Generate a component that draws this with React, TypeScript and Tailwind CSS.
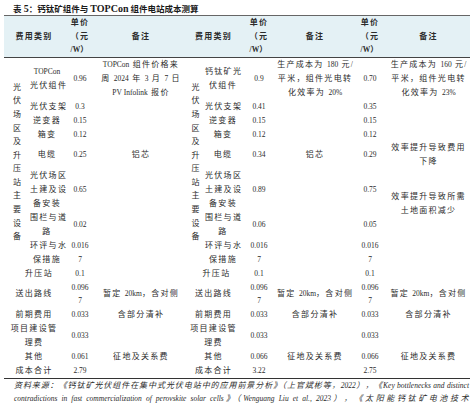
import React from 'react';

const font = "font-['Liberation_Serif','Noto_Sans_CJK_SC',serif]";

// latin runs are narrower than the CJK text around them
function L({ children }: { children: React.ReactNode }) {
  return <span className="text-[7.5px] tracking-normal">{children}</span>;
}

const lines = (s: string) =>
  s.split('|').map((part, i, arr) => (
    <React.Fragment key={i}>
      {part}
      {i < arr.length - 1 && <br />}
    </React.Fragment>
  ));

function Vertical({ text }: { text: string }) {
  return (
    <div className="flex flex-col items-center">
      {Array.from(text).map((ch, i) => (
        <span key={i} className="block leading-[13.6px] tracking-normal">
          {ch}
        </span>
      ))}
    </div>
  );
}

function Th({ children, colSpan }: { children: React.ReactNode; colSpan?: number }) {
  return (
    <th
      colSpan={colSpan}
      className="h-[42px] p-0 align-middle text-center font-bold leading-[13.6px] whitespace-nowrap border-t border-b border-t-[#666] border-b-[#444] border-b-dotted"
    >
      {children}
    </th>
  );
}

type Cell = { v: React.ReactNode; rowSpan?: number; colSpan?: number; num?: boolean };

function Td({ cell, last }: { cell: Cell; last?: boolean }) {
  return (
    <td
      rowSpan={cell.rowSpan}
      colSpan={cell.colSpan}
      className={
        'p-0 align-middle text-center leading-[13.9px] whitespace-nowrap ' +
        (cell.num ? 'text-[7.5px] tracking-normal ' : '') +
        (last ? 'border-b border-[#333]' : '')
      }
    >
      {cell.v}
    </td>
  );
}

const group = '光伏场区及升压站主要设备';

const rows: Cell[][] = [
  [
    { v: <Vertical text={group} />, rowSpan: 8 },
    { v: <><L>TOPCon</L><br />光伏组件</> },
    { v: '0.96', num: true },
    {
      v: (
        <>
          <L>TOPCon</L> 组件价格来<br />周 <L>2024</L> 年 <L>3</L> 月 <L>7</L> 日<br />
          <L>PV Infolink</L> 报价
        </>
      ),
    },
    { v: <Vertical text={group} />, rowSpan: 8 },
    { v: lines('钙钛矿光|伏组件') },
    { v: '0.9', num: true },
    { v: <>生产成本为 <L>180</L> 元<L>/</L><br />平米，组件光电转<br />化效率为 <L>20%</L></> },
    { v: '0.70', num: true },
    { v: <>生产成本为 <L>160</L> 元<L>/</L><br />平米，组件光电转<br />化效率为 <L>23%</L></> },
  ],
  [
    { v: '光伏支架' }, { v: '0.3', num: true }, { v: '' },
    { v: '光伏支架' }, { v: '0.41', num: true }, { v: '' },
    { v: '0.35', num: true }, { v: '' },
  ],
  [
    { v: '逆变器' }, { v: '0.15', num: true }, { v: '' },
    { v: '逆变器' }, { v: '0.15', num: true }, { v: '' },
    { v: '0.15', num: true }, { v: '' },
  ],
  [
    { v: '箱变' }, { v: '0.12', num: true }, { v: '' },
    { v: '箱变' }, { v: '0.12', num: true }, { v: '' },
    { v: '0.12', num: true }, { v: '' },
  ],
  [
    { v: '电缆' }, { v: '0.25', num: true }, { v: '铝芯' },
    { v: '电缆' }, { v: '0.34', num: true }, { v: '铝芯' },
    { v: '0.29', num: true }, { v: lines('效率提升导致费用|下降') },
  ],
  [
    { v: lines('光伏场区|土建及设|备安装') }, { v: '0.65', num: true }, { v: '' },
    { v: lines('光伏场区|土建及设|备安装') }, { v: '0.89', num: true }, { v: '' },
    { v: '0.75', num: true }, { v: lines('效率提升导致所需|土地面积减少'), rowSpan: 2 },
  ],
  [
    { v: lines('围栏与道|路') }, { v: '0.02', num: true }, { v: '' },
    { v: lines('围栏与道|路') }, { v: '0.06', num: true }, { v: '' },
    { v: '0.05', num: true },
  ],
  [
    { v: lines('环评与水|保措施') }, { v: lines('0.016|7'), num: true }, { v: '' },
    { v: lines('环评与水|保措施') }, { v: lines('0.016|7'), num: true }, { v: '' },
    { v: lines('0.016|7'), num: true }, { v: '' },
  ],
  [
    { v: <span className="pl-[10px]">升压站</span>, colSpan: 2 }, { v: '0.1', num: true }, { v: '' },
    { v: <span className="pl-[6px]">升压站</span>, colSpan: 2 }, { v: '0.1', num: true }, { v: '' },
    { v: '0.1', num: true }, { v: '' },
  ],
  [
    { v: '送出路线', colSpan: 2 }, { v: lines('0.096|7'), num: true }, { v: <>暂定 <L>20km</L>，含对侧</> },
    { v: '送出路线', colSpan: 2 }, { v: lines('0.096|7'), num: true }, { v: <>暂定 <L>20km</L>，含对侧</> },
    { v: lines('0.096|7'), num: true }, { v: <>暂定 <L>20km</L>，含对侧</> },
  ],
  [
    { v: '前期费用', colSpan: 2 }, { v: '0.033', num: true }, { v: '含部分清补' },
    { v: '前期费用', colSpan: 2 }, { v: '0.033', num: true }, { v: '含部分清补' },
    { v: '0.033', num: true }, { v: '含部分清补' },
  ],
  [
    { v: lines('项目建设管|理费'), colSpan: 2 }, { v: '0.033', num: true }, { v: '' },
    { v: lines('项目建设管|理费'), colSpan: 2 }, { v: '0.033', num: true }, { v: '' },
    { v: '0.033', num: true }, { v: '' },
  ],
  [
    { v: '其他', colSpan: 2 }, { v: '0.061', num: true }, { v: '征地及关系费' },
    { v: '其他', colSpan: 2 }, { v: '0.066', num: true }, { v: '征地及关系费' },
    { v: '0.066', num: true }, { v: '征地及关系费' },
  ],
  [
    { v: '成本合计', colSpan: 2 }, { v: '2.79', num: true }, { v: '' },
    { v: '成本合计', colSpan: 2 }, { v: '3.22', num: true }, { v: '' },
    { v: '2.75', num: true }, { v: '' },
  ],
];

const colWidths = ['w-[26px]', 'w-[34px]', 'w-[32px]', 'w-[90px]', 'w-[19px]', 'w-[36px]', 'w-[36px]', 'w-[76px]', 'w-[34px]', 'w-[83px]'];

export default function App() {
  return (
    <div className={`${font} w-[474px] h-[404px] overflow-hidden bg-white text-[#2b2b2b]`}>
      <div className="pl-[13px] pt-[2px] h-[15px] leading-[13px] text-[8.5px] font-bold text-[#1a1a1a] whitespace-nowrap">
        表 <span className="text-[10px]">5</span>：钙钛矿组件与 <span className="text-[10px]">TOPCon</span> 组件电站成本测算
      </div>

      <table className="ml-[4px] w-[466px] table-fixed border-collapse text-[8px] tracking-[1.3px]">
        <colgroup>
          {colWidths.map((w, i) => (
            <col key={i} className={w} />
          ))}
        </colgroup>
        <thead className="bg-[#e4f1f5]">
          <tr>
            <Th colSpan={2}>费用类别</Th>
            <Th>单价<br />（元<br /><L>/W</L>）</Th>
            <Th>备注</Th>
            <Th colSpan={2}>费用类别</Th>
            <Th>单价<br />（元<br /><L>/W</L>）</Th>
            <Th>备注</Th>
            <Th>单价<br />（元<br /><L>/W</L>）</Th>
            <Th>备注</Th>
          </tr>
        </thead>
        <tbody>
          {rows.map((r, i) => (
            <tr key={i}>
              {r.map((c, j) => (
                <Td key={j} cell={c} last={i === rows.length - 1} />
              ))}
            </tr>
          ))}
        </tbody>
      </table>

      <div className="ml-[14px] w-[455px] italic text-[8px] leading-[13.4px] tracking-[0.4px] text-[#2b2b2b]">
        <div className="text-justify [text-align-last:justify]">
          资料来源：《钙钛矿光伏组件在集中式光伏电站中的应用前景分析》（上官斌彬等，<L>2022</L>），《<L>Key bottlenecks and distinct</L>
        </div>
        <div className="text-justify [text-align-last:justify]">
          <L>contradictions in fast commercialization of perovskite solar cells</L>》（<L>Wenguang Liu et al., 2023</L>），《太阳能钙钛矿电池技术
        </div>
        <div className="text-justify [text-align-last:justify]">
          发展与挑战分析》（刘洋等，<L>2023</L>），国信证券经济研究所整理
        </div>
      </div>
    </div>
  );
}
